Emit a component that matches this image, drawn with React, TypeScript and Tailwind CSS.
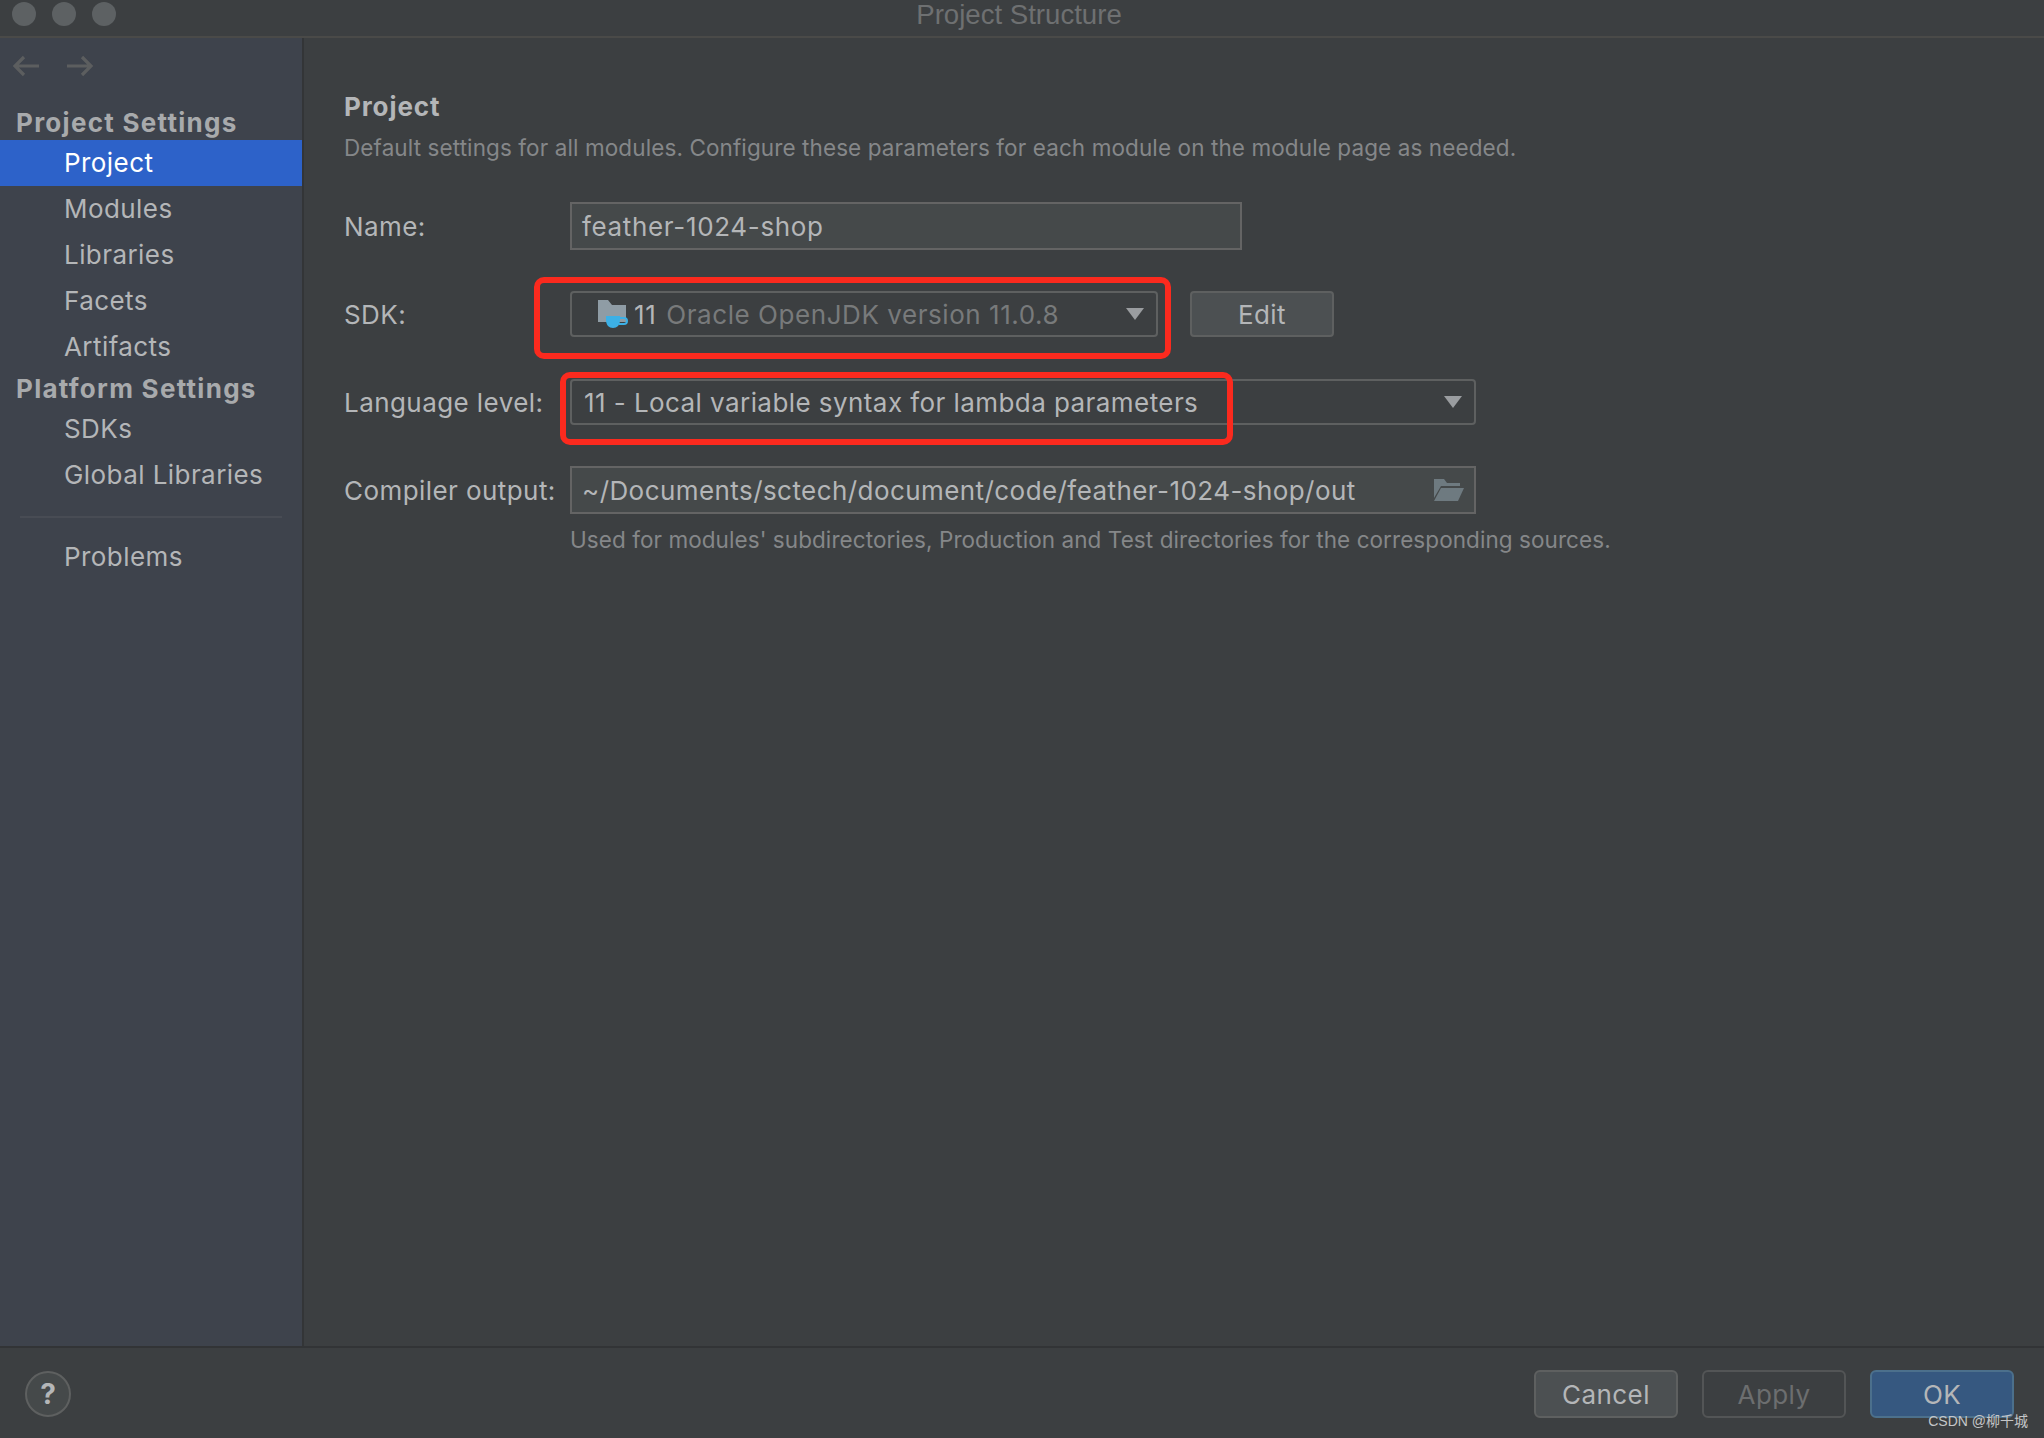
const ui = "font-['Inter','Liberation_Sans',sans-serif]";

const settingsItems = ["Project", "Modules", "Libraries", "Facets", "Artifacts"];
const platformItems = ["SDKs", "Global Libraries"];

function SideItem({ label, active }: { label: string; active?: boolean }) {
  return (
    <div
      className={`h-[46px] pl-16 pb-[1px] flex items-center text-[26px] tracking-[0.43px] ${
        active ? "bg-[#2d62c9] text-white" : "text-[#b4b6b8]"
      }`}
    >
      {label}
    </div>
  );
}

function SideHeader({ label }: { label: string }) {
  return (
    <div className="h-9 pl-4 flex items-center text-[26px] font-bold text-[#a8aaac] tracking-[1.28px]">
      {label}
    </div>
  );
}

function Arrow({ flip }: { flip?: boolean }) {
  return (
    <svg width="28" height="22" viewBox="0 0 28 22" className={flip ? "-scale-x-100" : ""}>
      <path d="M12 2 3 11l9 9M3 11h24" fill="none" stroke="#5c5e5f" strokeWidth="3.2" />
    </svg>
  );
}

function Caret() {
  return (
    <svg width="18" height="12" viewBox="0 0 18 12">
      <path d="M0 0h18L9 12z" fill="#9a9da0" />
    </svg>
  );
}

function Label({ text }: { text: string }) {
  return <div className="w-[226px] shrink-0 text-[26px] tracking-[0.43px] text-[#b4b6b8]">{text}</div>;
}

function JdkIcon() {
  return (
    <svg width="30" height="28" viewBox="0 0 30 28" className="shrink-0">
      <path d="M0 0h10l4 5h14v17H0z" fill="#8f9ca5" />
      <path d="M8 16h14v4c0 5-3 8-7 8s-7-3-7-8z" fill="#3cb0e6" />
      <path d="M22 18h4a2.5 2.5 0 0 1 0 6h-5" fill="none" stroke="#3cb0e6" strokeWidth="2" />
    </svg>
  );
}

function OpenFolder() {
  return (
    <svg width="30" height="22" viewBox="0 0 30 22">
      <path d="M0 0h10l3 4h13v3H7L0 19z" fill="#6e7a80" />
      <path d="M7 9h23l-6 13H0z" fill="#6e7a80" />
    </svg>
  );
}

function FooterButton({ label, className }: { label: string; className: string }) {
  return (
    <div className={`w-[144px] h-12 rounded-[6px] border-2 flex items-center justify-center text-[26px] tracking-[0.43px] ${className}`}>
      {label}
    </div>
  );
}

export default function App() {
  return (
    <div className={`${ui} relative w-[2044px] h-[1438px] overflow-hidden flex flex-col bg-[#3c3f41]`}>
      <div className="relative h-[38px] shrink-0 border-b-2 border-[#4a4a48] flex items-start gap-4 pl-3 pt-0.5">
        <div className="w-6 h-6 rounded-full bg-[#5d6163]" />
        <div className="w-6 h-6 rounded-full bg-[#5d6163]" />
        <div className="w-6 h-6 rounded-full bg-[#5d6163]" />
        <div className="absolute inset-x-0 top-0 h-[30px] pr-[6px] flex items-center justify-center font-['Liberation_Sans',sans-serif] text-[27.6px] text-[#6e7071]">
          Project Structure
        </div>
      </div>

      <div className="flex-1 flex min-h-0">
        <aside className="w-[304px] shrink-0 bg-[#3e434c] border-r-2 border-[#333537]">
          <div className="h-[66px] flex items-center gap-[26px] pl-3 pb-[10px]">
            <Arrow />
            <Arrow flip />
          </div>
          <SideHeader label="Project Settings" />
          {settingsItems.map((item) => (
            <SideItem key={item} label={item} active={item === "Project"} />
          ))}
          <SideHeader label="Platform Settings" />
          {platformItems.map((item) => (
            <SideItem key={item} label={item} />
          ))}
          <div className="mx-5 mt-[18px] mb-4 h-0.5 bg-[#484c54]" />
          <SideItem label="Problems" />
        </aside>

        <main className="flex-1 pl-10 pt-[50px]">
          <div className="text-[26px] leading-[38px] font-bold tracking-[0.9px] text-[#b4b6b8]">Project</div>
          <div className="mt-[7px] text-[22.5px] leading-[30px] tracking-[0.1px] text-[#858789]">
            Default settings for all modules. Configure these parameters for each module on the module page as needed.
          </div>

          <div className="mt-[39px] flex items-center h-12">
            <Label text="Name:" />
            <div className="w-[672px] h-12 pl-[10px] flex items-center bg-[#45494a] border-2 border-[#646464] text-[26px] tracking-[0.66px] text-[#b4b6b8]">
              feather-1024-shop
            </div>
          </div>

          <div className="mt-[41px] flex items-center h-[46px]">
            <Label text="SDK:" />
            <div className="w-[588px] h-[46px] pl-[26px] pr-3 flex items-center rounded-[4px] border-2 border-[#5e6060] text-[26px] tracking-[0.56px]">
              <JdkIcon />
              <span className="ml-[6px] text-[#b4b6b8]">11</span>
              <span className="ml-[10px] text-[#787a7b]">Oracle OpenJDK version 11.0.8</span>
              <div className="ml-auto">
                <Caret />
              </div>
            </div>
            <div className="ml-8 w-[144px] h-[46px] rounded-[4px] border-2 border-[#5e6060] bg-[#4c5052] flex items-center justify-center text-[26px] tracking-[0.43px] text-[#b4b6b8]">
              Edit
            </div>
          </div>

          <div className="mt-[42px] flex items-center h-[46px]">
            <Label text="Language level:" />
            <div className="w-[906px] h-[46px] pl-3 pr-3 flex items-center rounded-[4px] border-2 border-[#5e6060] text-[26px] tracking-[0.43px] text-[#b4b6b8]">
              11 - Local variable syntax for lambda parameters
              <div className="ml-auto">
                <Caret />
              </div>
            </div>
          </div>

          <div className="mt-[41px] flex items-center h-12">
            <Label text="Compiler output:" />
            <div className="w-[906px] h-12 pl-[10px] pr-[10px] flex items-center bg-[#45494a] border-2 border-[#646464] text-[26px] tracking-[0.43px] text-[#b4b6b8]">
              ~/Documents/sctech/document/code/feather-1024-shop/out
              <div className="ml-auto">
                <OpenFolder />
              </div>
            </div>
          </div>

          <div className="mt-[11px] ml-[226px] text-[22.5px] leading-[30px] tracking-[0.07px] text-[#858789]">
            Used for modules' subdirectories, Production and Test directories for the corresponding sources.
          </div>
        </main>
      </div>

      <footer className="h-[92px] shrink-0 border-t-2 border-[#323436] flex items-center pl-[25px] pr-[30px] pt-[2px]">
        <div className="w-[46px] h-[46px] rounded-full border-2 border-[#5e6060] bg-[#45494a] flex items-center justify-center text-[28px] font-bold text-[#b4b6b8]">
          ?
        </div>
        <div className="ml-auto flex gap-6">
          <FooterButton label="Cancel" className="bg-[#4c5052] border-[#5e6060] text-[#b4b6b8]" />
          <FooterButton label="Apply" className="border-[#535556] text-[#6c6e6f]" />
          <FooterButton label="OK" className="bg-[#365880] border-[#4c708c] text-[#b4b6b8]" />
        </div>
      </footer>

      {/* annotation boxes and watermark sit on top of the dialog */}
      <div className="absolute left-[534px] top-[277px] w-[637px] h-[82px] rounded-[10px] border-[6px] border-[#fb2a1e]" />
      <div className="absolute left-[560px] top-[372px] w-[673px] h-[73px] rounded-[10px] border-[6px] border-[#fb2a1e]" />
      <div className="absolute right-4 top-[1411px] font-['Liberation_Sans','Noto_Sans_CJK_SC',sans-serif] text-[14px] leading-5 text-[#c4c6c8]">
        CSDN @柳千城
      </div>
    </div>
  );
}
